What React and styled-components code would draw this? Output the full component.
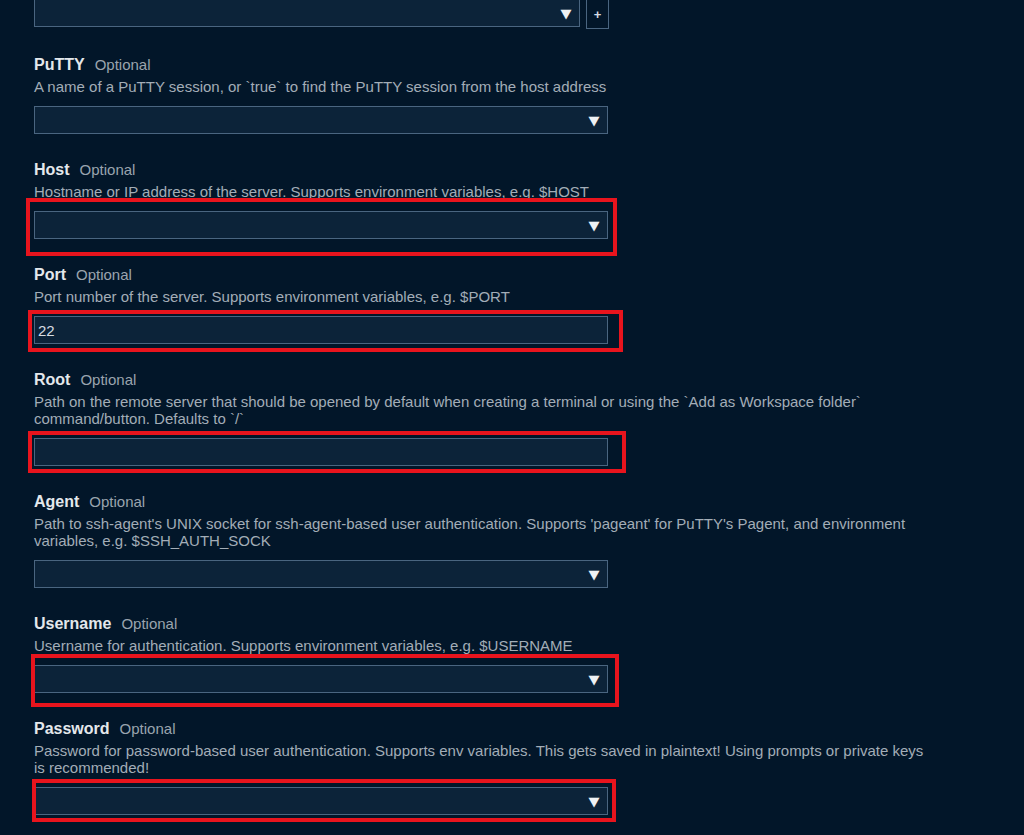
import React from "react";
import styled, { createGlobalStyle } from "styled-components";

const Global = createGlobalStyle`
  html, body { margin: 0; padding: 0; background: #021629; }
  body { font-family: "Liberation Sans", Arial, sans-serif; overflow: hidden; }
`;

const Page = styled.div`
  width: 1024px;
  height: 835px;
  display: flex;
  flex-direction: column;
  background: #021629;
  overflow: hidden;
`;

const Content = styled.div`
  flex: 1;
  padding: 0 0 0 34px;
  display: flex;
  flex-direction: column;
`;

const TopRow = styled.div`
  display: flex;
  gap: 6px;
  margin-top: -1px;
  margin-bottom: 25px;
`;

const Field = styled.div`
  display: flex;
  flex-direction: column;
  margin-bottom: 25px;
`;

const LabelRow = styled.div`
  display: flex;
  align-items: baseline;
  gap: 10px;
  height: 22px;
  line-height: 22px;
`;

const Label = styled.span`
  font-weight: bold;
  font-size: 16px;
  color: #e4e8ec;
`;

const Optional = styled.span`
  font-size: 15px;
  color: #9aa4ae;
`;

const Desc = styled.div`
  margin-top: 2px;
  margin-bottom: 11px;
  max-width: 890px;
  font-size: 15px;
  line-height: 17px;
  color: #a3adb7;
`;

const Control = styled.div`
  position: relative;
  width: ${(p) => p.$width || 574}px;
`;

const Box = styled.div`
  box-sizing: border-box;
  height: 28px;
  width: 100%;
  display: flex;
  align-items: center;
  justify-content: space-between;
  background: #0c2339;
  border: 1px solid #4a6580;
  padding: 0 8px 0 3px;
  font-size: 15px;
  color: #d6dce2;
`;

const Arrow = styled.span`
  font-size: 13px;
  color: #eef1f4;
  font-family: "DejaVu Sans", sans-serif;
  transform: scaleX(1.1);
`;

const PlusButton = styled.div`
  box-sizing: border-box;
  width: 23px;
  height: 30px;
  border: 1px solid #4a6580;
  display: flex;
  align-items: center;
  justify-content: center;
  color: #d6dce2;
  font-size: 13px;
  font-weight: bold;
`;

const Highlight = styled.div`
  position: absolute;
  top: ${(p) => p.$t}px;
  right: ${(p) => p.$r}px;
  bottom: ${(p) => p.$b}px;
  left: ${(p) => p.$l}px;
  border: 4px solid #e8141d;
  pointer-events: none;
`;

const Footer = styled.div`
  height: 10px;
  border-top: 1px solid #1a2b3c;
  background: #021629;
`;

const fields = [
  {
    name: "PuTTY",
    desc: "A name of a PuTTY session, or `true` to find the PuTTY session from the host address",
    select: true,
  },
  {
    name: "Host",
    desc: "Hostname or IP address of the server. Supports environment variables, e.g. $HOST",
    select: true,
    hl: { t: -13, r: -9, b: -17, l: -8 },
  },
  {
    name: "Port",
    desc: "Port number of the server. Supports environment variables, e.g. $PORT",
    value: "22",
    hl: { t: -6, r: -15, b: -8, l: -6 },
  },
  {
    name: "Root",
    desc: "Path on the remote server that should be opened by default when creating a terminal or using the `Add as Workspace folder` command/button. Defaults to `/`",
    hl: { t: -7, r: -18, b: -7, l: -6 },
  },
  {
    name: "Agent",
    desc: "Path to ssh-agent's UNIX socket for ssh-agent-based user authentication. Supports 'pageant' for PuTTY's Pagent, and environment variables, e.g. $SSH_AUTH_SOCK",
    select: true,
  },
  {
    name: "Username",
    desc: "Username for authentication. Supports environment variables, e.g. $USERNAME",
    select: true,
    hl: { t: -11, r: -11, b: -14, l: -3 },
  },
  {
    name: "Password",
    desc: "Password for password-based user authentication. Supports env variables. This gets saved in plaintext! Using prompts or private keys is recommended!",
    select: true,
    hl: { t: -8, r: -8, b: -7, l: -2 },
  },
];

export default function App() {
  return (
    <Page>
      <Global />
      <Content>
        <TopRow>
          <Control $width={546}>
            <Box>
              <span />
              <Arrow>▼</Arrow>
            </Box>
          </Control>
          <PlusButton>+</PlusButton>
        </TopRow>
        {fields.map((f) => (
          <Field key={f.name}>
            <LabelRow>
              <Label>{f.name}</Label>
              <Optional>Optional</Optional>
            </LabelRow>
            <Desc>{f.desc}</Desc>
            <Control>
              <Box>
                <span>{f.value || ""}</span>
                {f.select && <Arrow>▼</Arrow>}
              </Box>
              {f.hl && <Highlight $t={f.hl.t} $r={f.hl.r} $b={f.hl.b} $l={f.hl.l} />}
            </Control>
          </Field>
        ))}
      </Content>
      <Footer />
    </Page>
  );
}
